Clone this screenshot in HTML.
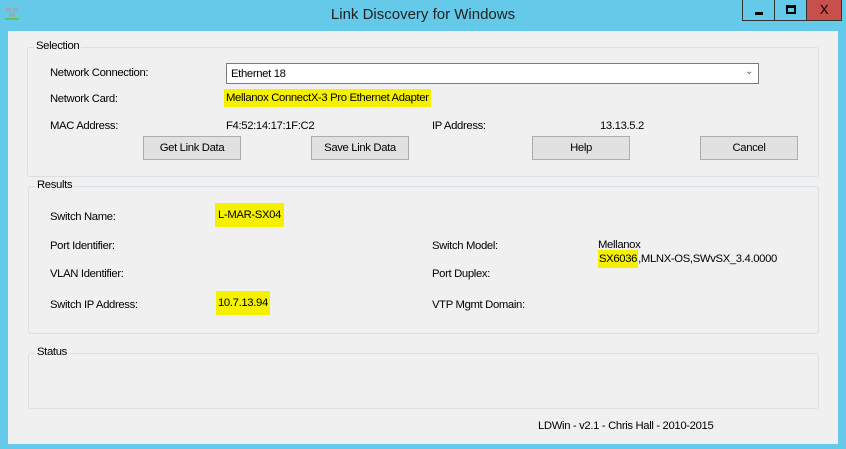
<!DOCTYPE html>
<html><head><meta charset="utf-8"><style>
*{margin:0;padding:0;box-sizing:border-box}
body{width:846px;height:449px;background:#65c9e9;position:relative;overflow:hidden;font-family:"Liberation Sans",sans-serif;font-size:11.3px;color:#000;letter-spacing:-0.35px}
.a{position:absolute;white-space:nowrap}
#client{position:absolute;left:8px;top:31px;width:830px;height:413px;background:#f0f0f0}
.g{position:absolute;border:1px solid #d9dfe4;border-radius:3px}
.gl{position:absolute;background:#f0f0f0;padding:0 2px;left:6px;top:-8px}
.btn{position:absolute;background:#e1e1e1;border:1px solid #adadad;text-align:center;line-height:22px;height:24px;width:98px}
.hl{background:#f5f000;padding:2px 2px}
</style></head><body>
<div class="a" style="left:5px;top:7px;width:14px;height:14px">
<svg width="14" height="14"><rect x="1" y="1" width="5" height="4" fill="#9ab"/><rect x="8" y="1" width="5" height="4" fill="#9ab"/><rect x="4" y="6" width="6" height="4" fill="#9ab"/><rect x="0" y="11" width="14" height="2" fill="#5c5"/></svg></div>
<div class="a" style="left:0;width:846px;top:6px;text-align:center;font-size:15px;color:#222;letter-spacing:0">Link Discovery for Windows</div>
<div class="a" style="left:742px;top:0;width:33px;height:21px;border:1px solid #333;border-top:none;background:#65c9e9"><div class="a" style="left:12px;top:12px;width:8px;height:3px;background:#000"></div></div>
<div class="a" style="left:774px;top:0;width:33px;height:21px;border:1px solid #333;border-top:none;background:#65c9e9"><div class="a" style="left:11px;top:5px;width:10px;height:9px;border:2px solid #000;border-top-width:3px"></div></div>
<div class="a" style="left:806px;top:0;width:36px;height:21px;border:1px solid #333;border-top:none;background:#c7504a;color:#000;font-weight:normal;font-size:13px;text-align:center;line-height:20px">X</div>
<div id="client">
<div class="g" style="left:19px;top:16px;width:792px;height:130px"><span class="gl">Selection</span></div>
<div class="g" style="left:20px;top:155px;width:791px;height:148px"><span class="gl">Results</span></div>
<div class="g" style="left:20px;top:322px;width:791px;height:56px"><span class="gl">Status</span></div>
<div class="a" style="left:42px;top:36px">Network Connection:</div>
<div class="a" style="left:218px;top:32px;width:533px;height:21px;background:#fff;border:1px solid #7a7a7a;padding:4px 4px">Ethernet 18<span style="position:absolute;right:5px;top:2px;font-size:10px;color:#555">&#8964;</span></div>
<div class="a" style="left:42px;top:62px">Network Card:</div>
<div class="a" style="left:216px;top:61px"><span class="hl" style="padding:3px 2px">Mellanox ConnectX-3 Pro Ethernet Adapter</span></div>
<div class="a" style="left:42px;top:89px">MAC Address:</div>
<div class="a" style="left:218px;top:89px">F4:52:14:17:1F:C2</div>
<div class="a" style="left:424px;top:89px">IP Address:</div>
<div class="a" style="left:592px;top:89px">13.13.5.2</div>
<div class="btn" style="left:135px;top:105px">Get Link Data</div>
<div class="btn" style="left:303px;top:105px">Save Link Data</div>
<div class="btn" style="left:524px;top:105px">Help</div>
<div class="btn" style="left:692px;top:105px">Cancel</div>
<div class="a" style="left:42px;top:180px">Switch Name:</div>
<div class="a" style="left:207px;top:178px"><span class="hl" style="padding:6px 3px">L-MAR-SX04</span></div>
<div class="a" style="left:42px;top:209px">Port Identifier:</div>
<div class="a" style="left:424px;top:209px">Switch Model:</div>
<div class="a" style="left:590px;top:207px;line-height:14px">Mellanox<br><span class="hl" style="padding:3px 1px">SX6036</span>,MLNX-OS,SWvSX_3.4.0000</div>
<div class="a" style="left:42px;top:237px">VLAN Identifier:</div>
<div class="a" style="left:424px;top:237px">Port Duplex:</div>
<div class="a" style="left:42px;top:268px">Switch IP Address:</div>
<div class="a" style="left:208px;top:266px"><span class="hl" style="padding:6px 2px">10.7.13.94</span></div>
<div class="a" style="left:424px;top:268px">VTP Mgmt Domain:</div>
<div class="a" style="left:530px;top:389px">LDWin - v2.1 - Chris Hall - 2010-2015</div>
</div>
</body></html>
